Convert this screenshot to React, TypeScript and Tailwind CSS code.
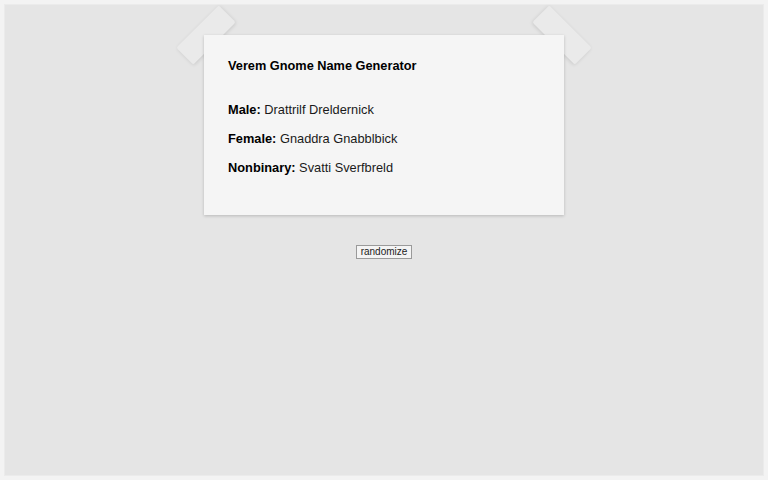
import React from 'react';

const names = [
  { label: 'Male:', value: 'Drattrilf Dreldernick' },
  { label: 'Female:', value: 'Gnaddra Gnabblbick' },
  { label: 'Nonbinary:', value: 'Svatti Sverfbreld' },
];

const Tape: React.FC<{ side: 'left' | 'right' }> = ({ side }) => (
  <div
    className={
      'absolute -z-10 -top-[12px] w-[60px] h-[24px] bg-[#eaeaea] shadow-[0_1px_4px_rgba(0,0,0,0.12)] rounded-[2px] ' +
      (side === 'left' ? '-left-[28px] -rotate-45' : '-right-[28px] rotate-45')
    }
  />
);

export default function App() {
  return (
    <div className="w-[768px] h-[480px] bg-[#f3f3f3] p-[4px] font-['Liberation_Sans',Arial,sans-serif]">
      <div className="isolate h-[472px] bg-[#e5e5e5] border border-[#ebebeb] flex flex-col items-center">
        <div className="relative mt-[30px] w-[360px] h-[180px] bg-[#f5f5f5] shadow-[0_1px_3px_rgba(0,0,0,0.2)] px-6 pt-[23px]">
          <Tape side="left" />
          <Tape side="right" />
          <h1 className="text-[12.75px] leading-[15px] font-bold text-black">Verem Gnome Name Generator</h1>
          <div className="mt-[29px] flex flex-col gap-[14px]">
            {names.map(n => (
              <p key={n.label} className="text-[12.8px] leading-[15px] text-[#1a1a1a]">
                <span className="font-bold text-black">{n.label}</span> {n.value}
              </p>
            ))}
          </div>
        </div>
        <button className="mt-[30px] h-[14px] px-[4px] border border-[#9a9a9a] bg-[#f4f4f4] text-[10px] leading-[12px] text-[#222]">
          randomize
        </button>
      </div>
    </div>
  );
}
